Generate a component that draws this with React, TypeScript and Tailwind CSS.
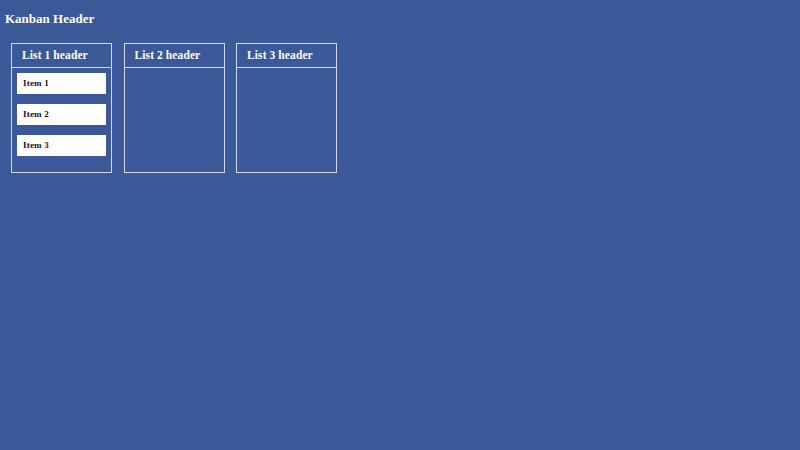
const lists = [
  { title: "List 1 header", items: ["Item 1", "Item 2", "Item 3"] },
  { title: "List 2 header", items: [] as string[] },
  { title: "List 3 header", items: [] as string[] },
];

function KanbanList({ title, items }: { title: string; items: string[] }) {
  return (
    <div className="w-[101px] h-[130px] border border-[#cfd9ee] flex flex-col">
      <div className="h-[24px] border-b border-[#cfd9ee] flex items-center pl-[10px] text-[11.5px] font-bold tracking-[0.1px] text-white">
        {title}
      </div>
      <div className="p-[5px] flex flex-col">
        {items.map((item) => (
          <div
            key={item}
            className="h-[21px] mb-[10px] bg-white flex items-center pl-[6px] pt-[1px] text-[9px] font-bold tracking-[0.2px] text-[#111]"
          >
            {item}
          </div>
        ))}
      </div>
    </div>
  );
}

export default function App() {
  return (
    <div className="w-[800px] h-[450px] bg-[#3b5998] font-['Liberation_Serif',serif]">
      <h1 className="pl-[5px] pt-[11px] text-[13px] leading-[15px] font-bold text-white">
        Kanban Header
      </h1>
      <div className="flex gap-[11.5px] pl-[11px] pt-[17px]">
        {lists.map((list) => (
          <KanbanList key={list.title} title={list.title} items={list.items} />
        ))}
      </div>
    </div>
  );
}
